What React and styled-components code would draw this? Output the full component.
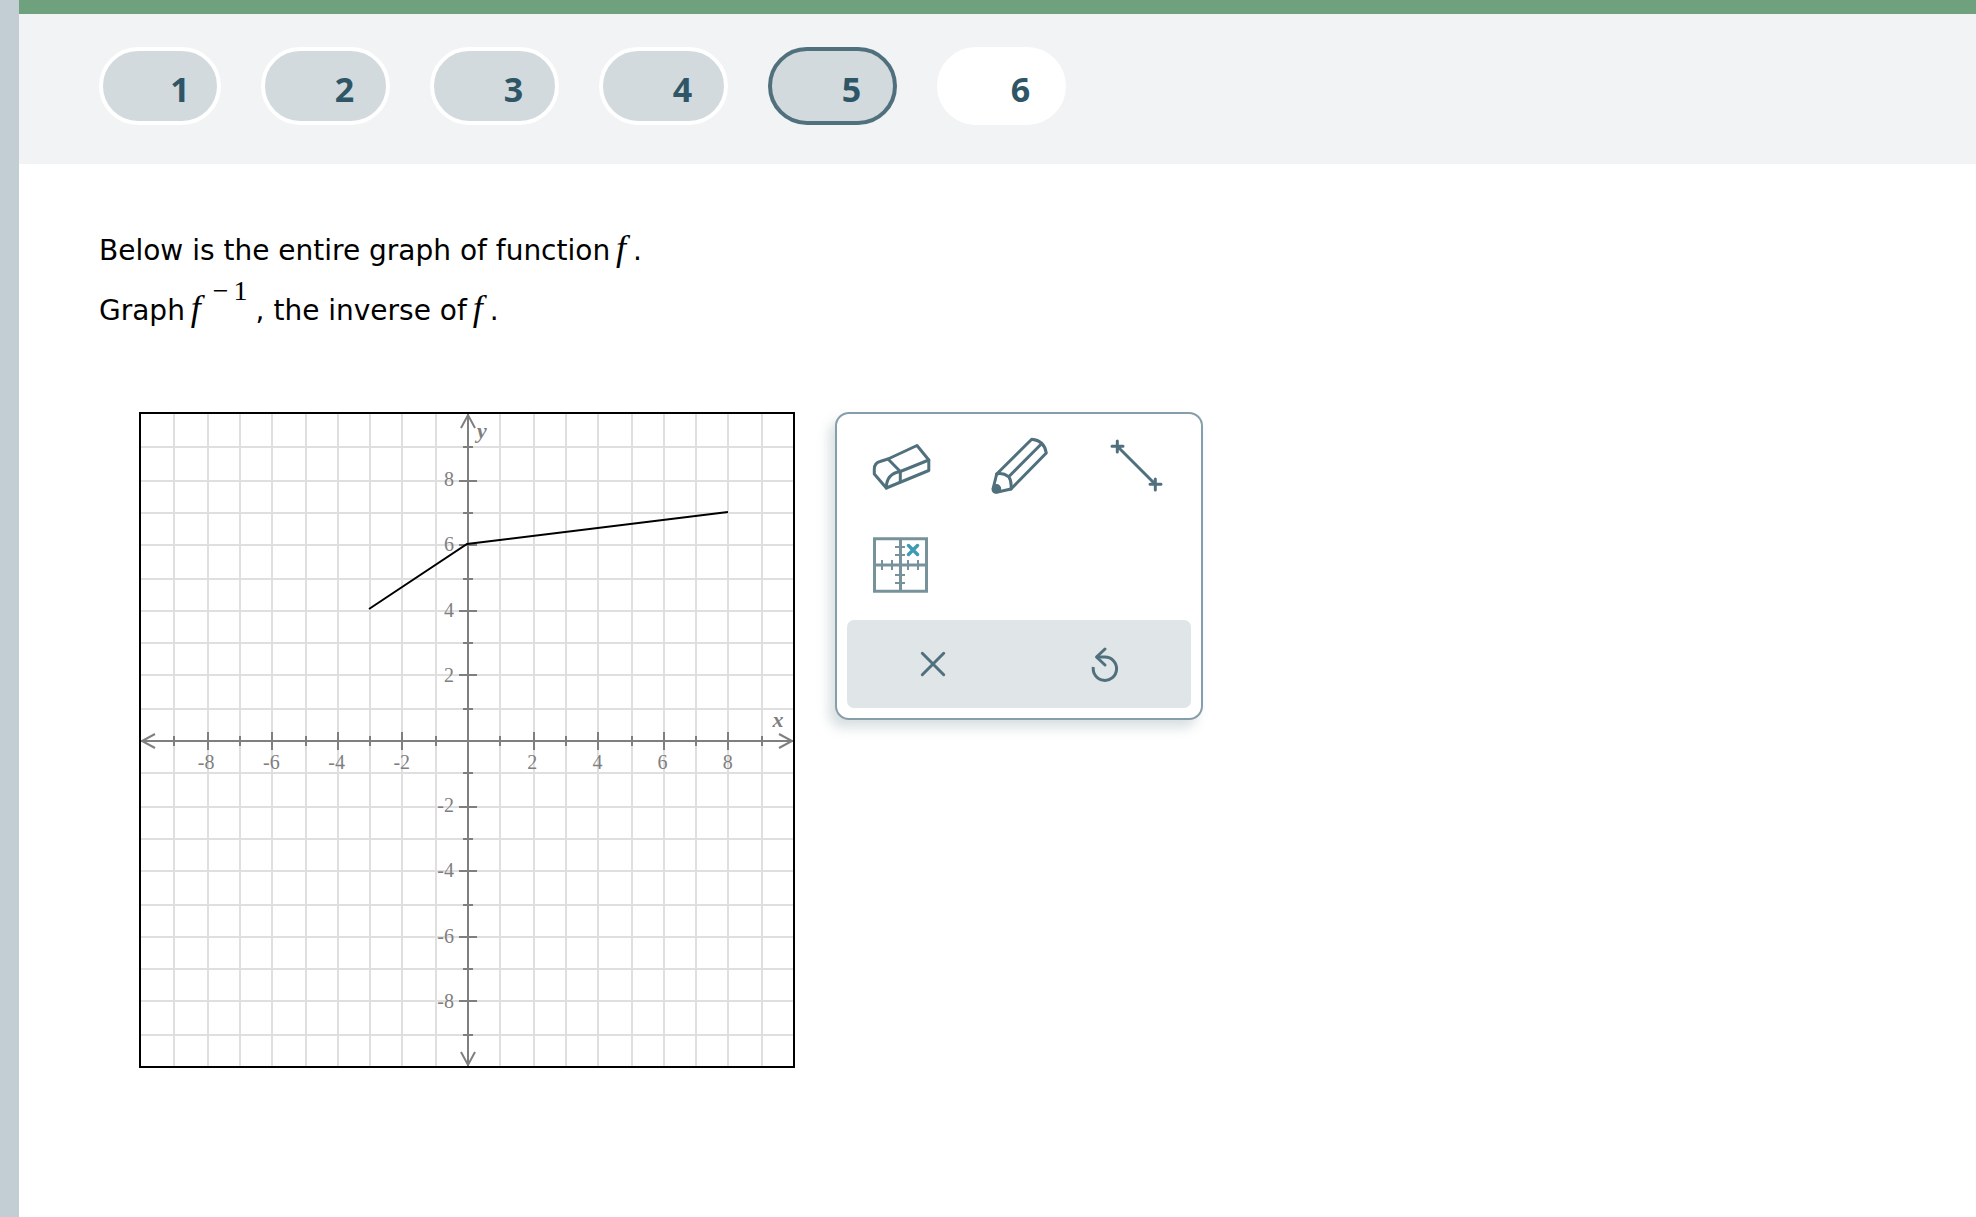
import React from "react";
import styled, { createGlobalStyle } from "styled-components";

const GlobalStyle = createGlobalStyle`
  *, *::before, *::after { box-sizing: border-box; }
  body {
    margin: 0;
    background: #ffffff;
    color: #000000;
    font-family: "DejaVu Sans", Verdana, sans-serif;
  }
`;

const Page = styled.div`
  display: flex;
  min-height: 100vh;
`;

const SideRail = styled.aside`
  flex: 0 0 19px;
  background: #c3ced4;
`;

const Main = styled.main`
  flex: 1;
  min-width: 0;
`;

const ProgressBar = styled.div`
  height: 14px;
  background: #6fa17f;
`;

const QuestionNav = styled.nav`
  display: flex;
  gap: 40px;
  padding: 33px 80px 39px;
  background: #f1f3f5;
`;

const QuestionButton = styled.button`
  width: ${(p) => (p.$narrow ? 122 : 129)}px;
  height: 78px;
  padding: 6px 0 0 ${(p) => (p.$narrow ? 40 : 38)}px;
  border: 4px solid ${(p) => (p.$current ? "#50707d" : "#ffffff")};
  border-radius: 39px;
  background: ${(p) => (p.$open ? "#ffffff" : "#d3dade")};
  color: #2f5666;
  font: 700 34px/40px "Open Sans", "Noto Sans", sans-serif;
  text-align: center;
  cursor: pointer;
`;

const Exercise = styled.section`
  padding: 57px 80px 80px;
`;

const Prompt = styled.p`
  margin: 0;
  font-size: 28px;
  line-height: 60px;
`;

const MathText = styled.span`
  font-family: "Liberation Serif", "Times New Roman", serif;
  font-size: 36px;
  line-height: 0;
  font-style: italic;
  margin: 0 7px 0 -3px;
`;

const Exponent = styled.sup`
  margin: 0 8px 0 5px;
  font-family: "Liberation Serif", "Times New Roman", serif;
  font-size: 28px;
  line-height: 0;
  vertical-align: 20px;
`;

const Digit = styled.span`
  margin-left: 5px;
`;

const Workspace = styled.div`
  display: flex;
  flex-wrap: wrap;
  align-items: flex-start;
  gap: 40px;
  padding: 71px 0 0 40px;
`;

const Graph = styled.svg`
  display: block;
  flex: none;
`;

const AxisNumber = styled.text`
  fill: #7f7f7f;
  font: 20px "Liberation Serif", "Times New Roman", serif;
  text-anchor: ${(p) => p.$anchor};
`;

const AxisName = styled.text`
  fill: #7f7f7f;
  font: italic bold 22px "Liberation Serif", "Times New Roman", serif;
  text-anchor: middle;
`;

const ToolPanel = styled.div`
  width: 368px;
  border: 2px solid #869ea9;
  border-radius: 14px;
  background: #ffffff;
  box-shadow: -6px 8px 12px rgba(80, 112, 125, 0.22);
`;

const ToolGrid = styled.div`
  display: grid;
  grid-template-columns: repeat(3, 1fr);
  grid-auto-rows: 100px;
  padding: 0 6px 0 7px;
`;

const ToolButton = styled.button`
  display: flex;
  align-items: center;
  justify-content: center;
  padding: 0;
  border: 0;
  background: transparent;
  color: #50707d;
  cursor: pointer;
`;

const ActionBar = styled.div`
  display: grid;
  grid-template-columns: 1fr 1fr;
  height: 88px;
  margin: 6px 10px 10px;
  border-radius: 7px;
  background: #e0e5e8;
`;

const Icon = styled.svg`
  display: block;
  fill: none;
  stroke: currentColor;
  stroke-width: 3;
  stroke-linecap: round;
  stroke-linejoin: round;
`;

const CENTER = 329;
const UNIT = 32.6;
const LINES = [35, 69, 101, 133, 167, 199, 231, 263, 297, 361, 395, 427, 459, 493, 525, 557, 589, 623];
const LABELS = [-8, -6, -4, -2, 2, 4, 6, 8];
const isMajor = (i) => Math.abs(i < 9 ? i - 9 : i - 8) % 2 === 0;

function CoordinatePlane() {
  return (
    <Graph width="656" height="656" viewBox="0 0 656 656" role="img" aria-label="Graph of function f">
      <g stroke="#dfdfdf" strokeWidth="2">
        {LINES.map((p) => (
          <path key={p} d={`M${p} 2V654M2 ${p}H654`} />
        ))}
      </g>
      <g stroke="#7f7f7f" strokeWidth="2" fill="none">
        <path d={`M${CENTER} 2V654M2 ${CENTER}H654`} />
        {LINES.map((p, i) =>
          isMajor(i) ? (
            <path key={p} d={`M${p} 320V338M320 ${p}H338`} />
          ) : (
            <path key={p} d={`M${p} 324V334M324 ${p}H334`} />
          )
        )}
        <path d="M322 16L329 3L336 16M322 640L329 653L336 640M16 322L3 329L16 336M640 322L653 329L640 336" />
      </g>
      {LABELS.map((n) => (
        <React.Fragment key={n}>
          <AxisNumber $anchor="middle" x={328 + n * UNIT} y="357">{n}</AxisNumber>
          <AxisNumber $anchor="end" x="315" y={335 - n * UNIT}>{n}</AxisNumber>
        </React.Fragment>
      ))}
      <AxisName x="343" y="26">y</AxisName>
      <AxisName x="639" y="315">x</AxisName>
      <path d="M230 197L328 132L589 100" fill="none" stroke="#000000" strokeWidth="2" />
      <rect x="1" y="1" width="654" height="654" fill="none" stroke="#000000" strokeWidth="2" />
    </Graph>
  );
}

const EraserIcon = () => (
  <Icon width="65" height="64" viewBox="0 0 65 64">
    <path d="M18 27L47 13.5L58.8 28V38.5L16.3 56L4.3 42V37C4.3 32.5 6.5 30.5 10 29.5Z" />
    <path d="M18 27L30.3 39.5V49.5M30.3 39.5L58.8 28M30.3 39.5C21 41 16.3 46 16.3 56" />
  </Icon>
);

const PencilIcon = () => (
  <Icon width="65" height="64" viewBox="0 0 65 64">
    <path d="M44.7 7.3L9.7 42L6 57C6 59.5 7.5 60.5 9.5 60.3L24 57L59.3 21C58 13 53 8 44.7 7.3Z" />
    <path d="M9.7 42C14 41 18 42 21.7 44.7C24 48 24.5 52 24 57M21.7 44.7L54.3 12" />
    <circle cx="9.5" cy="56.7" r="3.2" fill="currentColor" />
  </Icon>
);

const SegmentIcon = () => (
  <Icon width="65" height="64" viewBox="0 0 65 64">
    <path d="M13.3 14.3L51.3 52.3M13.3 9V20M8 14.3H19M51.3 47V58M46 52.3H57" />
  </Icon>
);

const PlotIcon = () => (
  <Icon width="65" height="64" viewBox="0 0 65 64">
    <g stroke="#78929c" strokeLinecap="butt" strokeLinejoin="miter">
      <path d="M4.5 6.8H56.5V59.2H4.5ZM30.5 6V60M4 33H57" />
      <path strokeWidth="2" d="M12 28V38M22 28V38M38 28V38M48 28V38M25 15H35M25 23H35M25 43H35M25 51H35" />
    </g>
    <path stroke="#3e9bb3" strokeWidth="3.5" d="M38.5 13.5L47.5 22.5M47.5 13.5L38.5 22.5" />
  </Icon>
);

const ClearIcon = () => (
  <Icon width="40" height="40" viewBox="0 0 40 40">
    <path d="M9.3 9.3L30.7 30.7M30.7 9.3L9.3 30.7" />
  </Icon>
);

const UndoIcon = () => (
  <Icon width="40" height="40" viewBox="0 0 40 40">
    <path strokeLinecap="butt" d="M8.3 23A11.7 11.7 0 1 0 20 13H11" />
    <path d="M20 5L11.5 13L20 21" />
  </Icon>
);

const QUESTIONS = [1, 2, 3, 4, 5, 6];
const TOOLS = [
  ["Eraser", EraserIcon],
  ["Pencil", PencilIcon],
  ["Line segment", SegmentIcon],
  ["Plot a point", PlotIcon],
];

export default function App() {
  return (
    <Page>
      <GlobalStyle />
      <SideRail />
      <Main>
        <ProgressBar />
        <QuestionNav aria-label="Questions">
          {QUESTIONS.map((n) => (
            <QuestionButton
              key={n}
              type="button"
              $narrow={n === 1}
              $current={n === 5}
              $open={n === 6}
              aria-current={n === 5 ? "step" : undefined}
            >
              {n}
            </QuestionButton>
          ))}
        </QuestionNav>
        <Exercise>
          <Prompt>
            Below is the entire graph of function <MathText>f</MathText>.
          </Prompt>
          <Prompt>
            Graph <MathText>f</MathText>
            <Exponent>
              −<Digit>1</Digit>
            </Exponent>
            , the inverse of <MathText>f</MathText>.
          </Prompt>
          <Workspace>
            <CoordinatePlane />
            <ToolPanel>
              <ToolGrid>
                {TOOLS.map(([label, Drawing]) => (
                  <ToolButton key={label} type="button" aria-label={label}>
                    <Drawing />
                  </ToolButton>
                ))}
              </ToolGrid>
              <ActionBar>
                <ToolButton type="button" aria-label="Clear">
                  <ClearIcon />
                </ToolButton>
                <ToolButton type="button" aria-label="Undo">
                  <UndoIcon />
                </ToolButton>
              </ActionBar>
            </ToolPanel>
          </Workspace>
        </Exercise>
      </Main>
    </Page>
  );
}
